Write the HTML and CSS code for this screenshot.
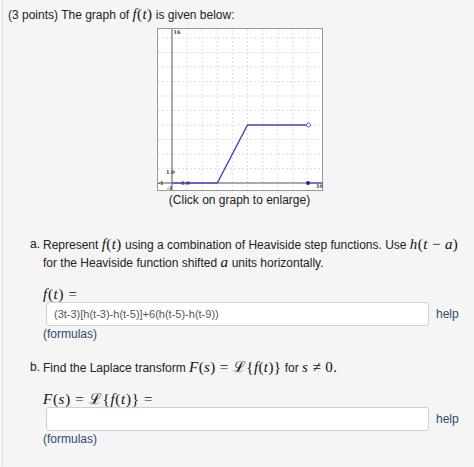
FILE: index.html
```html
<!DOCTYPE html>
<html>
<head>
<meta charset="utf-8">
<link rel="stylesheet" href="styles.css">
</head>
<body>
<div class="page">
  <p class="title">(3 points) The graph of <span class="m"><i>f</i>(<i>t</i>)</span> is given below:</p>
  <div class="graph">
    <svg class="plot" width="166" height="163" viewBox="0 0 166 163">
      <rect x="0.5" y="0.5" width="165" height="162" fill="#fff" stroke="#9a9a9a"/>
      <g stroke="#dedede" stroke-width="1" stroke-dasharray="2 2">
        <line x1="30.1" y1="1" x2="30.1" y2="162"/>
        <line x1="45.2" y1="1" x2="45.2" y2="162"/>
        <line x1="60.3" y1="1" x2="60.3" y2="162"/>
        <line x1="75.4" y1="1" x2="75.4" y2="162"/>
        <line x1="90.5" y1="1" x2="90.5" y2="162"/>
        <line x1="105.6" y1="1" x2="105.6" y2="162"/>
        <line x1="120.7" y1="1" x2="120.7" y2="162"/>
        <line x1="135.8" y1="1" x2="135.8" y2="162"/>
        <line x1="150.9" y1="1" x2="150.9" y2="162"/>
        <line x1="1" y1="140.5" x2="165" y2="140.5"/>
        <line x1="1" y1="126" x2="165" y2="126"/>
        <line x1="1" y1="111.5" x2="165" y2="111.5"/>
        <line x1="1" y1="97" x2="165" y2="97"/>
        <line x1="1" y1="82.5" x2="165" y2="82.5"/>
        <line x1="1" y1="68" x2="165" y2="68"/>
        <line x1="1" y1="53.5" x2="165" y2="53.5"/>
        <line x1="1" y1="39" x2="165" y2="39"/>
        <line x1="1" y1="24.5" x2="165" y2="24.5"/>
        <line x1="1" y1="10" x2="165" y2="10"/>
      </g>
      <line x1="15" y1="1" x2="15" y2="162" stroke="#555" stroke-width="1"/>
      <line x1="1" y1="155" x2="165" y2="155" stroke="#555" stroke-width="1"/>
      <polyline points="15,155 60.3,155 90.5,97 150,97" fill="none" stroke="#4a44b8" stroke-width="1.4"/>
      <line x1="15" y1="155" x2="60.3" y2="155" stroke="#6a66e0" stroke-width="1.6"/>
      <line x1="151" y1="155" x2="166" y2="155" stroke="#6a66e0" stroke-width="1.6"/>
      <circle cx="151.5" cy="97" r="2" fill="#fff" stroke="#4a44b8" stroke-width="0.8"/>
      <circle cx="151" cy="155" r="2" fill="#2a2680"/>
      <g class="lbl">
        <text x="16.5" y="5.5">16</text>
        <text x="9" y="146">1.0</text>
        <text x="24" y="157">1.0</text>
        <text x="1" y="157">-1</text>
        <text x="10" y="162">-1</text>
        <text x="159" y="160">10</text>
      </g>
    </svg>
  </div>
  <p class="caption">(Click on graph to enlarge)</p>

  <div class="part part-a">
    <span class="marker">a.</span>
    <div class="body">
      <p class="q">Represent <span class="m"><i>f</i>(<i>t</i>)</span> using a combination of Heaviside step functions. Use <span class="m"><i>h</i>(<i>t</i> − <i>a</i>)</span> for the Heaviside function shifted <span class="m"><i>a</i></span> units horizontally.</p>
      <div class="answer">
        <div class="label"><span class="m big"><i>f</i>(<i>t</i>) =</span></div>
        <div class="row">
          <div class="input">(3t-3)[h(t-3)-h(t-5)]+6(h(t-5)-h(t-9))</div>
          <span class="link">help</span>
        </div>
        <div class="link formulas">(formulas)</div>
      </div>
    </div>
  </div>

  <div class="part part-b">
    <span class="marker">b.</span>
    <div class="body">
      <p class="q">Find the Laplace transform <span class="m"><i>F</i>(<i>s</i>) = ℒ{<i>f</i>(<i>t</i>)}</span> for <span class="m"><i>s</i> ≠ 0.</span></p>
      <div class="answer">
        <div class="label"><span class="m big"><i>F</i>(<i>s</i>) = ℒ{<i>f</i>(<i>t</i>)} =</span></div>
        <div class="row">
          <div class="input"></div>
          <span class="link">help</span>
        </div>
        <div class="link formulas">(formulas)</div>
      </div>
    </div>
  </div>
</div>
</body>
</html>
```

FILE: styles.css
```css
html, body {
  margin: 0;
  padding: 0;
  background: #f5f5f5;
}
body {
  font-family: "Liberation Sans", Arial, sans-serif;
  font-size: 12px;
  color: #222;
}
.page {
  margin-left: 2px;
  border-left: 1px solid #dddddd;
  padding: 6px 0 20px 5px;
  min-height: 440px;
}
p { margin: 0; }
.title {
  line-height: 16px;
}
.m {
  font-family: "Liberation Serif", "Times New Roman", serif;
  font-size: 15px;
  letter-spacing: 0.4px;
  white-space: nowrap;
  color: #111;
}
.m i { font-style: italic; }
.m.big { font-size: 15px; letter-spacing: 0.7px; }
.graph {
  margin-top: 5px;
  display: flex;
  justify-content: center;
  padding-right: 2px;
}
.plot { display: block; }
.lbl text {
  font-family: "DejaVu Serif", serif;
  font-size: 5px;
  font-weight: bold;
  fill: #333;
}
.caption {
  text-align: center;
  line-height: 16px;
  margin-top: 1px;
  padding-right: 3px;
}
.part {
  display: flex;
  padding-left: 22px;
  padding-right: 10px;
}
.part-a { margin-top: 28px; }
.part-b { margin-top: 18px; }
.marker {
  width: 13px;
  flex: none;
  line-height: 17px;
}
.body { flex: 1; }
.q { line-height: 17px; }
.answer {
  margin-top: 14px;
}
.label {
  line-height: 16px;
  height: 16px;
}
.row {
  display: flex;
  align-items: center;
  margin-left: 3px;
}
.input {
  width: 383px;
  height: 24px;
  box-sizing: border-box;
  background: #fff;
  border: 1px solid #cfcfcf;
  border-radius: 3px;
  padding: 0 7px;
  line-height: 22px;
  font-size: 11px;
  color: #555;
  flex: none;
}
.link {
  color: #2d4a72;
}
.row .link {
  margin-left: 7px;
}
.formulas {
  line-height: 14px;
  margin-top: 1px;
}
```
